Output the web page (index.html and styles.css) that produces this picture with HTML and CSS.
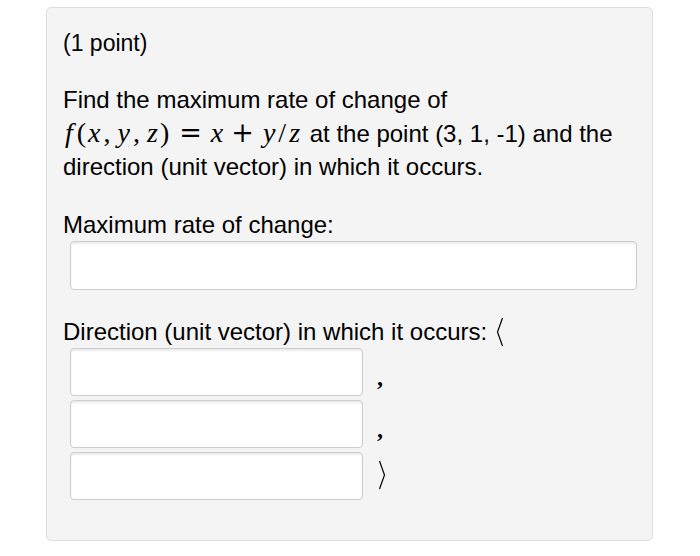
FILE: index.html
```html
<!DOCTYPE html>
<html>
<head>
<meta charset="utf-8">
<link rel="stylesheet" href="styles.css">
</head>
<body>
<div class="card">
  <p class="points">(1 point)</p>
  <p class="question">Find the maximum rate of change of<br><span class="math"><i class="v f">f</i><span class="p">(</span><i class="v">x</i><span class="c">,</span><i class="v">y</i><span class="c">,</span><i class="v">z</i><span class="p">)</span><span class="op">=</span><i class="v">x</i><span class="op plus">+</span><i class="v">y</i><span class="sl">/</span><i class="v">z</i></span> at the point (3, 1, -1) and the<br>direction (unit vector) in which it occurs.</p>
  <p class="label">Maximum rate of change:</p>
  <input class="field wide" type="text">
  <p class="label dir">Direction (unit vector) in which it occurs: <svg class="bracket" width="8" height="30" viewBox="0 0 8 30"><polyline points="6.5,1 1.5,15 6.5,29" fill="none" stroke="#000" stroke-width="1.2"/></svg></p>
  <div class="vec">
    <div class="vec-row"><input class="field short" type="text"><span class="sep">,</span></div>
    <div class="vec-row"><input class="field short" type="text"><span class="sep">,</span></div>
    <div class="vec-row"><input class="field short" type="text"><svg class="bracket close" width="8" height="30" viewBox="0 0 8 30"><polyline points="1.5,1 6.5,15 1.5,29" fill="none" stroke="#000" stroke-width="1.2"/></svg></div>
  </div>
</div>
</body>
</html>
```
FILE: styles.css
```css
html, body {
  margin: 0;
  padding: 0;
  background: #ffffff;
}
body {
  padding: 7px 47px 14px 46px;
  font-family: "Liberation Sans", Arial, sans-serif;
  font-size: 24px;
  color: #000;
}
.card {
  background: #f4f4f4;
  border: 1px solid #dedede;
  border-radius: 5px;
  padding: 19px 16px 39px 16px;
  height: 534px;
  box-sizing: border-box;
}
p {
  margin: 0;
  line-height: 33px;
}
.points {
  font-size: 23px;
}
.question {
  margin-top: 23px;
}
.math {
  font-family: "Liberation Serif", "Times New Roman", serif;
  font-size: 28px;
  white-space: nowrap;
  margin-right: 2px;
}
.math .v {
  font-style: italic;
  display: inline-block;
  padding: 0 1px;
}
.math .v.f {
  padding: 0 3px 0 2px;
}
.math .p {
  display: inline-block;
  padding: 0 1px;
}
.math .c {
  display: inline-block;
  padding: 0 6px 0 2px;
}
.op {
  display: inline-block;
  font-family: "DejaVu Serif", serif;
  font-size: 27px;
  font-weight: 300;
  padding: 0 8px 0 9px;
}
.op.plus {
  padding: 0 8px 0 7px;
}
.sl {
  display: inline-block;
  padding: 0 2px;
}
.label {
  margin-top: 25px;
}
.label.dir {
  margin-top: 25px;
  display: flex;
  align-items: center;
  gap: 9px;
}
.field {
  display: block;
  height: 48px;
  box-sizing: border-box;
  margin: 0 0 0 7px;
  background: #fff;
  border: 1px solid #cdcdcd;
  border-radius: 4px;
  box-shadow: inset 0 2px 2px rgba(0, 0, 0, 0.08);
  outline: none;
}
.field.wide {
  width: 567px;
  height: 49px;
}
.field.short {
  width: 293px;
}
.vec {
  display: flex;
  flex-direction: column;
  gap: 4px;
}
.vec-row {
  display: flex;
  align-items: center;
  gap: 14px;
}
.sep {
  font-family: "Liberation Serif", serif;
  font-size: 24px;
  margin-top: 10px;
  font-weight: bold;
}
.bracket.close {
  margin-left: 1px;
  margin-top: -2px;
}
```
